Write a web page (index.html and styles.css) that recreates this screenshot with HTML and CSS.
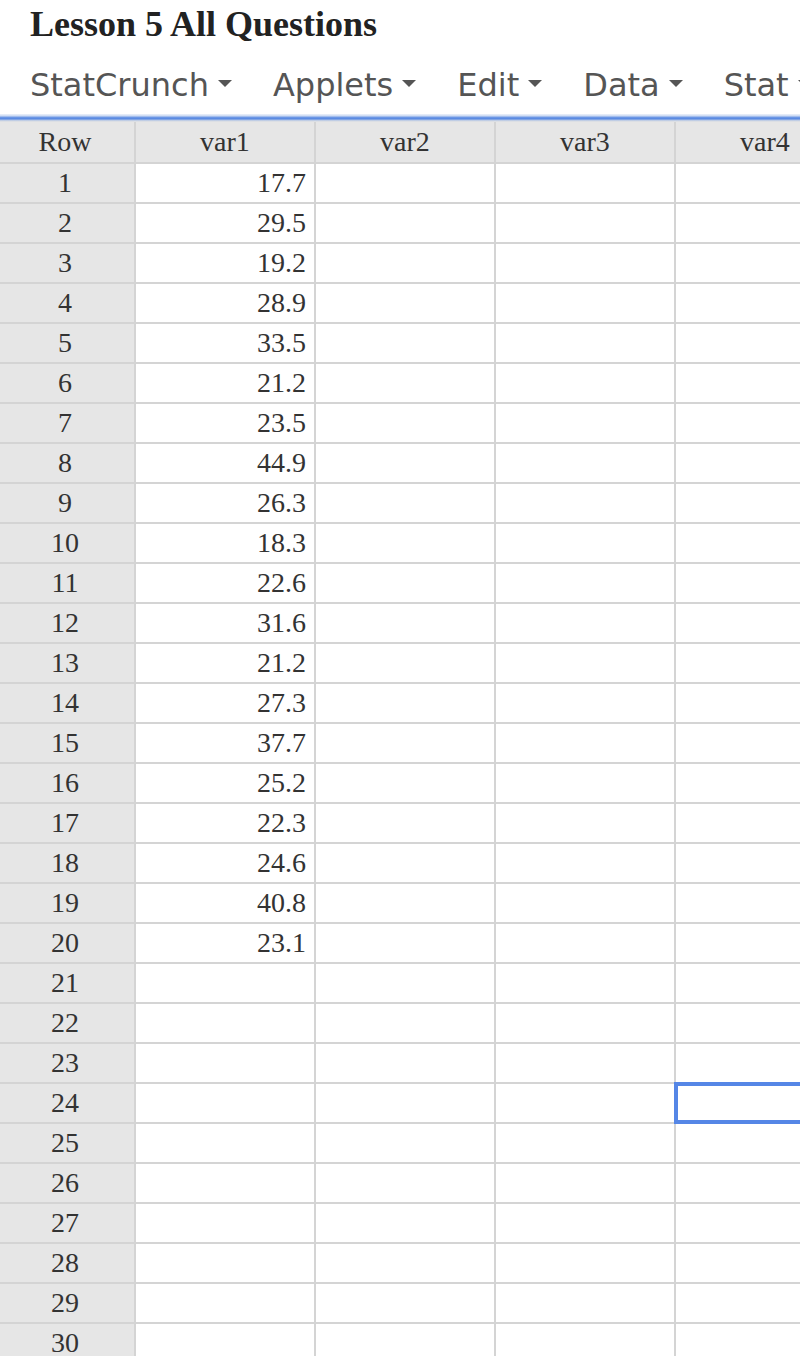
FILE: index.html
```html
<!DOCTYPE html>
<html>
<head>
<meta charset="utf-8">
<title>Lesson 5 All Questions</title>
<link rel="stylesheet" href="styles.css">
</head>
<body>
<div class="page">
  <h1 class="title">Lesson 5 All Questions</h1>
  <nav class="menubar">
    <span class="menu">StatCrunch<span class="caret"></span></span>
    <span class="menu">Applets<span class="caret"></span></span>
    <span class="menu">Edit<span class="caret"></span></span>
    <span class="menu">Data<span class="caret"></span></span>
    <span class="menu">Stat<span class="caret"></span></span>
  </nav>
  <div class="rule"></div>
  <div class="sheet">
    <table class="grid">
      <colgroup>
        <col class="c-row"><col class="c-var"><col class="c-var"><col class="c-var"><col class="c-var">
      </colgroup>
      <thead>
        <tr><th class="rowhead">Row</th><th>var1</th><th>var2</th><th>var3</th><th>var4</th></tr>
      </thead>
      <tbody>
        <tr><td class="rownum">1</td><td class="num">17.7</td><td></td><td></td><td></td></tr>
        <tr><td class="rownum">2</td><td class="num">29.5</td><td></td><td></td><td></td></tr>
        <tr><td class="rownum">3</td><td class="num">19.2</td><td></td><td></td><td></td></tr>
        <tr><td class="rownum">4</td><td class="num">28.9</td><td></td><td></td><td></td></tr>
        <tr><td class="rownum">5</td><td class="num">33.5</td><td></td><td></td><td></td></tr>
        <tr><td class="rownum">6</td><td class="num">21.2</td><td></td><td></td><td></td></tr>
        <tr><td class="rownum">7</td><td class="num">23.5</td><td></td><td></td><td></td></tr>
        <tr><td class="rownum">8</td><td class="num">44.9</td><td></td><td></td><td></td></tr>
        <tr><td class="rownum">9</td><td class="num">26.3</td><td></td><td></td><td></td></tr>
        <tr><td class="rownum">10</td><td class="num">18.3</td><td></td><td></td><td></td></tr>
        <tr><td class="rownum">11</td><td class="num">22.6</td><td></td><td></td><td></td></tr>
        <tr><td class="rownum">12</td><td class="num">31.6</td><td></td><td></td><td></td></tr>
        <tr><td class="rownum">13</td><td class="num">21.2</td><td></td><td></td><td></td></tr>
        <tr><td class="rownum">14</td><td class="num">27.3</td><td></td><td></td><td></td></tr>
        <tr><td class="rownum">15</td><td class="num">37.7</td><td></td><td></td><td></td></tr>
        <tr><td class="rownum">16</td><td class="num">25.2</td><td></td><td></td><td></td></tr>
        <tr><td class="rownum">17</td><td class="num">22.3</td><td></td><td></td><td></td></tr>
        <tr><td class="rownum">18</td><td class="num">24.6</td><td></td><td></td><td></td></tr>
        <tr><td class="rownum">19</td><td class="num">40.8</td><td></td><td></td><td></td></tr>
        <tr><td class="rownum">20</td><td class="num">23.1</td><td></td><td></td><td></td></tr>
        <tr><td class="rownum">21</td><td></td><td></td><td></td><td></td></tr>
        <tr><td class="rownum">22</td><td></td><td></td><td></td><td></td></tr>
        <tr><td class="rownum">23</td><td></td><td></td><td></td><td></td></tr>
        <tr><td class="rownum">24</td><td></td><td></td><td></td><td class="selected"></td></tr>
        <tr><td class="rownum">25</td><td></td><td></td><td></td><td></td></tr>
        <tr><td class="rownum">26</td><td></td><td></td><td></td><td></td></tr>
        <tr><td class="rownum">27</td><td></td><td></td><td></td><td></td></tr>
        <tr><td class="rownum">28</td><td></td><td></td><td></td><td></td></tr>
        <tr><td class="rownum">29</td><td></td><td></td><td></td><td></td></tr>
        <tr><td class="rownum">30</td><td></td><td></td><td></td><td></td></tr>
      </tbody>
    </table>
  </div>
</div>
</body>
</html>
```

FILE: styles.css
```css
html, body {
  margin: 0;
  padding: 0;
  background: #ffffff;
}

.page {
  width: 800px;
  height: 1356px;
  overflow: hidden;
}

.title {
  margin: 4px 0 0 0;
  padding-left: 30px;
  font-family: "Liberation Serif", "Times New Roman", serif;
  font-weight: bold;
  font-size: 36px;
  line-height: 40px;
  color: #222222;
  white-space: nowrap;
}

.menubar {
  margin-top: 21px;
  padding-left: 30px;
  height: 40px;
  display: flex;
  gap: 41px;
  font-family: "DejaVu Sans", Verdana, sans-serif;
  font-size: 32px;
  line-height: 40px;
  color: #555555;
  white-space: nowrap;
  overflow: hidden;
}

.menu {
  flex: none;
}

.caret {
  display: inline-block;
  width: 0;
  height: 0;
  margin-left: 9px;
  border-left: 7px solid transparent;
  border-right: 7px solid transparent;
  border-top: 7px solid #555555;
  vertical-align: 9px;
}

.rule {
  margin-top: 9px;
  height: 8px;
  background: linear-gradient(to bottom,
    #eef2fa 0px,
    #c8d7f2 2px,
    #7ba2e8 3px,
    #5b8ae2 4px,
    #5b8ae2 5px,
    #a9bfe6 6px,
    #d6dbe3 7px,
    #e2e3e5 8px);
}

.sheet {
  width: 800px;
  overflow: hidden;
}

.grid {
  table-layout: fixed;
  border-collapse: separate;
  border-spacing: 0;
  width: 856px;
  font-family: "Liberation Serif", "Times New Roman", serif;
  font-size: 28px;
  color: #333333;
}

.c-row { width: 136px; }
.c-var { width: 180px; }

.grid th {
  height: 40px;
  padding: 0;
  font-weight: normal;
  text-align: center;
  vertical-align: middle;
  background: #e6e6e6;
  border-right: 2px solid #d4d4d4;
  border-bottom: 2px solid #d4d4d4;
  line-height: 40px;
}

.grid th.rowhead {
  padding-right: 4px;
}

.grid td {
  height: 38px;
  padding: 0 8px;
  line-height: 38px;
  vertical-align: middle;
  background: #ffffff;
  border-right: 2px solid #d4d4d4;
  border-bottom: 2px solid #d4d4d4;
}

.grid td.rownum {
  background: #e6e6e6;
  text-align: center;
  padding: 0 4px 0 0;
}

.grid td.num {
  text-align: right;
}

.grid td.selected {
  position: relative;
}

.grid td.selected::after {
  content: "";
  position: absolute;
  top: -2px;
  left: -2px;
  right: -2px;
  bottom: -2px;
  border: 4px solid #5586e6;
}
```
